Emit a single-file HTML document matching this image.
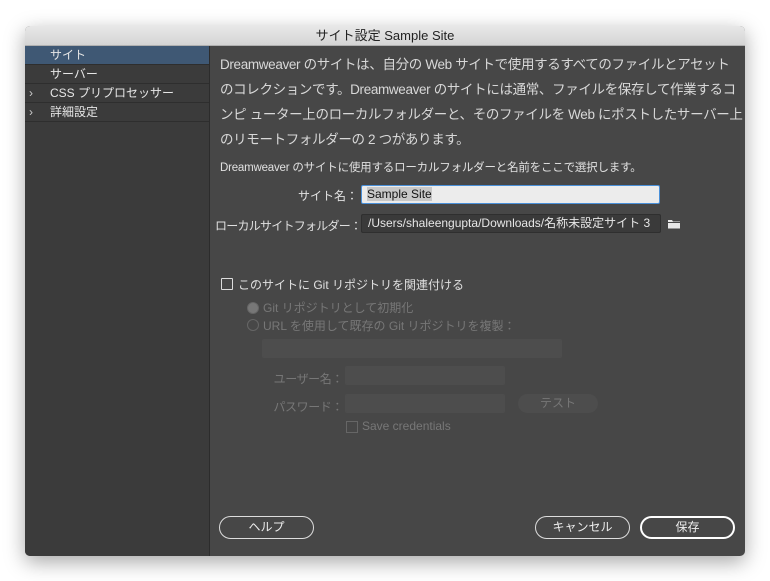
<!DOCTYPE html><html><head><style>
body{margin:0;width:770px;height:581px;background:#fff;position:relative;font-family:"Liberation Sans","Noto Sans CJK JP",sans-serif;overflow:hidden}
.win{position:absolute;left:25px;top:26px;width:720px;height:530px;background:#474747;border-radius:5px;overflow:hidden;box-shadow:0 6px 20px rgba(0,0,0,.35)}
.title{height:19px;background:linear-gradient(#e8e8e8,#d4d4d4);border-bottom:1px solid #b0b0b0;text-align:center;font-size:13px;line-height:19px;color:#222}
.side{position:absolute;left:0;top:20px;width:184px;bottom:0;background:#3b3b3b;border-right:1px solid #2c2c2c}
.side div{height:18px;line-height:18px;font-size:12px;color:#e6e6e6;border-bottom:1px solid #2e2e2e;padding-left:25px;position:relative}
.side .sel{background:#3f5874}
.side .ar::before{content:"›";position:absolute;left:4px;color:#ccc}
.t{position:absolute;color:#e0e0e0;font-size:12px;white-space:nowrap}
.r{text-align:right}
.big{font-size:13.5px;line-height:25px;color:#d8d8d8;letter-spacing:-0.35px}
.inp{position:absolute;background:#3a3a3a;border:1px solid #2f2f2f;border-radius:2px}
.dis{color:#777}
.btn{position:absolute;height:21px;border:1px solid #ddd;border-radius:12px;color:#eee;font-size:12px;text-align:center;line-height:21px}
</style></head><body>
<div class="win">
<div class="title">サイト設定 Sample Site</div>
<div class="side">
<div class="sel">サイト</div><div>サーバー</div><div class="ar">CSS プリプロセッサー</div><div class="ar">詳細設定</div>
</div>
<div class="t big" style="left:195px;top:26px">Dreamweaver のサイトは、自分の Web サイトで使用するすべてのファイルとアセット<br>のコレクションです。Dreamweaver のサイトには通常、ファイルを保存して作業するコ<br>ンピ ューター上のローカルフォルダーと、そのファイルを Web にポストしたサーバー上<br>のリモートフォルダーの 2 つがあります。</div>
<div class="t" style="left:195px;top:133px;font-size:11.5px;letter-spacing:-0.2px">Dreamweaver のサイトに使用するローカルフォルダーと名前をここで選択します。</div>
<div class="t r" style="left:195px;width:138px;top:161px">サイト名：</div>
<div class="inp" style="left:336px;top:159px;width:292px;height:17px;background:#ececec;border:1px solid #4a90d9;color:#111;font-size:12px;line-height:17px;padding-left:5px"><span style="background:#c8c8c8">Sample Site</span></div>
<div class="t r" style="left:190px;width:143px;top:191px;letter-spacing:-0.75px">ローカルサイトフォルダー：</div>
<div class="inp" style="left:336px;top:188px;width:292px;height:17px;color:#e6e6e6;font-size:12px;line-height:17px;padding-left:6px">/Users/shaleengupta/Downloads/名称未設定サイト 3</div>
<svg style="position:absolute;left:642px;top:192px" width="14" height="11"><path d="M1 2h4l1 1.5h7v7H1z" fill="#e8e8e8"/><path d="M1 4.5h12" stroke="#474747"/></svg>
<div style="position:absolute;left:196px;top:252px;width:10px;height:10px;border:1px solid #ddd;border-radius:1px"></div>
<div class="t" style="left:213px;top:250px">このサイトに Git リポジトリを関連付ける</div>
<div style="position:absolute;left:222px;top:276px;width:10px;height:10px;border-radius:50%;border:1px solid #666;background:#777"></div>
<div class="t dis" style="left:238px;top:273px">Git リポジトリとして初期化</div>
<div style="position:absolute;left:222px;top:293px;width:10px;height:10px;border-radius:50%;border:1px solid #666"></div>
<div class="t dis" style="left:238px;top:291px">URL を使用して既存の Git リポジトリを複製：</div>
<div class="inp" style="left:237px;top:313px;width:298px;height:17px;background:#4d4d4d;border-color:#4d4d4d"></div>
<div class="t dis r" style="left:240px;width:78px;top:344px;letter-spacing:-0.4px">ユーザー名：</div>
<div class="inp" style="left:320px;top:340px;width:158px;height:17px;background:#4d4d4d;border-color:#4d4d4d"></div>
<div class="t dis r" style="left:240px;width:78px;top:372px;letter-spacing:-0.4px">パスワード：</div>
<div class="inp" style="left:320px;top:368px;width:158px;height:17px;background:#4d4d4d;border-color:#4d4d4d"></div>
<div style="position:absolute;left:493px;top:368px;width:80px;height:19px;border-radius:10px;background:#4d4d4d;color:#777;font-size:12px;text-align:center;line-height:19px">テスト</div>
<div style="position:absolute;left:321px;top:395px;width:10px;height:10px;border:1px solid #666"></div>
<div class="t dis" style="left:337px;top:393px">Save credentials</div>
<div class="btn" style="left:194px;top:490px;width:93px">ヘルプ</div>
<div class="btn" style="left:510px;top:490px;width:93px">キャンセル</div>
<div class="btn" style="left:615px;top:490px;width:91px;border:2px solid #fff;height:19px;line-height:19px">保存</div>
</div>
</body></html>
